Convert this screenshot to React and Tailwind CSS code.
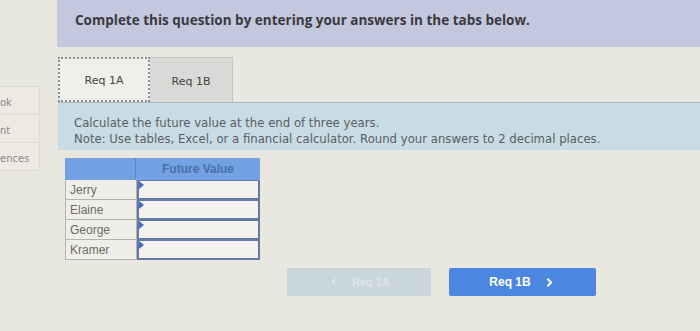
import { ChevronLeft, ChevronRight } from 'lucide-react';

const ROWS = ['Jerry', 'Elaine', 'George', 'Kramer'];

function Sidebar() {
  return (
    <div className="w-[57px] shrink-0 pt-[87px]">
      {['ok', 'nt', 'ences'].map((t) => (
        <div
          key={t}
          className="w-[40px] h-[29px] border-y border-r border-[#dedcd4] bg-[#eceae3] -mt-px flex items-center pt-[4px] text-[10px] text-[#8a8a88] leading-none"
        >
          {t}
        </div>
      ))}
    </div>
  );
}

function Tabs() {
  return (
    <div className="flex mt-[10px] ml-px h-[45px]">
      <div className="w-[92px] bg-[#f0efe9] border-2 border-dotted border-[#8a8f9c] flex items-center justify-center pt-1 text-[11px] text-[#444]">
        Req 1A
      </div>
      <div className="w-[83px] bg-[#d9dad8] border-t border-r border-[#c6c7c4] flex items-center justify-center pt-1 text-[11px] text-[#444]">
        Req 1B
      </div>
    </div>
  );
}

function AnswerTable() {
  return (
    <div className="ml-[8px] mt-[8px] w-[195px] font-['Liberation_Sans',Arial,sans-serif] text-[12px]">
      <div className="flex h-[22px] bg-[#72a2e4]">
        <div className="w-[71px] border-r border-[#5a86c8]" />
        <div className="flex-1 flex items-center justify-center font-bold text-[#4b6ea8]">
          Future Value
        </div>
      </div>
      {ROWS.map((name) => (
        <div key={name} className="flex h-[20px]">
          <div className="w-[72px] border border-t-0 border-[#b3b2ac] bg-[#efeee8] flex items-center pl-[4px] text-[#6c6c6a]">
            {name}
          </div>
          <div className="relative flex-1 border-2 border-t-[1px] border-[#6479a6] bg-[#f3f2ee]">
            <span className="absolute left-0 top-0 w-0 h-0 border-t-[4px] border-b-[4px] border-l-[5px] border-t-transparent border-b-transparent border-l-[#3f6fc4]" />
          </div>
        </div>
      ))}
    </div>
  );
}

function NavButtons() {
  return (
    <div className="flex gap-[18px] ml-[230px] mt-[8px] font-['Liberation_Sans',Arial,sans-serif]">
      <div className="w-[144px] h-[28px] bg-[#c9d7dd] flex items-center justify-center gap-3 text-[11px] font-bold text-[#dde5ea]">
        <ChevronLeft size={12} strokeWidth={3} />
        Req 1A
      </div>
      <div className="w-[147px] h-[28px] bg-[#4b87e0] rounded-[2px] flex items-center justify-center gap-3 text-[12px] font-bold text-white">
        Req 1B
        <ChevronRight size={13} strokeWidth={3.5} />
      </div>
    </div>
  );
}

export default function App() {
  return (
    <div className="w-[700px] h-[331px] overflow-hidden flex bg-[#e9e8e0] font-['DejaVu_Sans',Verdana,sans-serif]">
      <Sidebar />
      <div className="flex-1 flex flex-col">
        <div className="h-[47px] bg-[#c3c8de] flex items-center pl-[18px] pb-[6px]">
          <span className="font-['Open_Sans',sans-serif] font-bold text-[13.5px] text-[#3a3a3e]">
            Complete this question by entering your answers in the tabs below.
          </span>
        </div>
        <Tabs />
        <div className="ml-px h-[48px] bg-[#c8dce5] border-t border-[#a9b9c0] pl-[16px] pt-[12px] text-[11.7px] leading-[16px] text-[#5a5d62]">
          <div>Calculate the future value at the end of three years.</div>
          <div>Note: Use tables, Excel, or a financial calculator. Round your answers to 2 decimal places.</div>
        </div>
        <AnswerTable />
        <NavButtons />
      </div>
    </div>
  );
}
